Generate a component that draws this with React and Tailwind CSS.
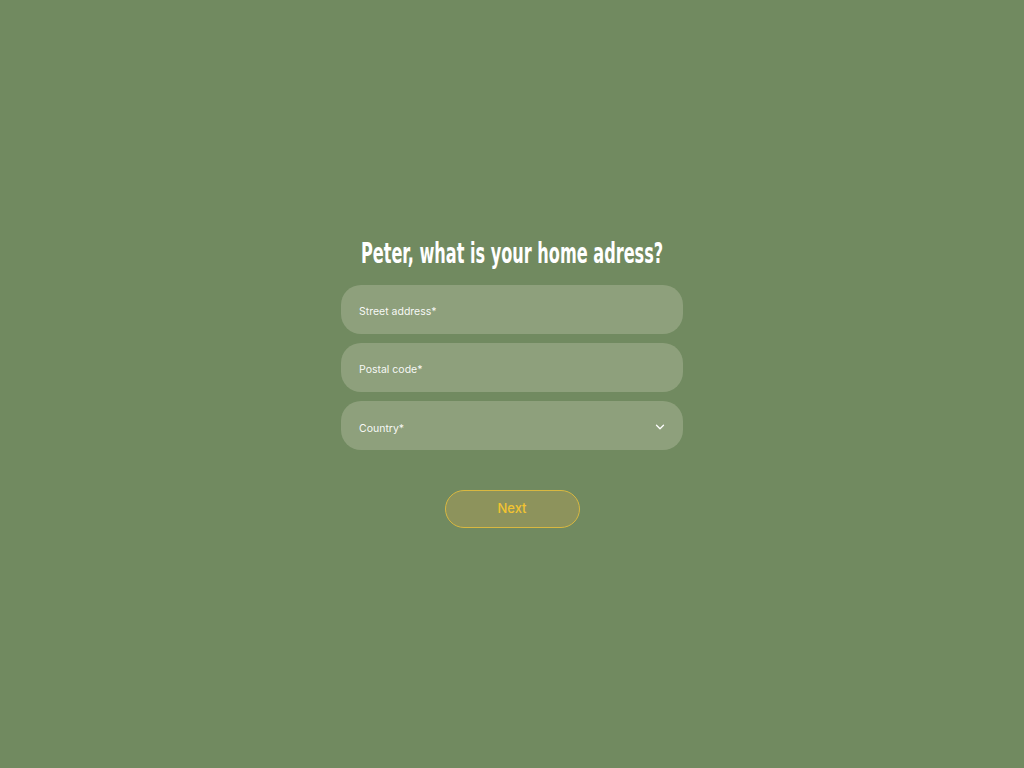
import React from 'react';
import { ChevronDown } from 'lucide-react';

const Field = ({ label, select, className = '' }) => (
  <div className={`flex h-[49px] w-full items-center justify-between rounded-[20px] bg-[#8ea07c] pl-[18px] pr-[16px] ${className}`}>
    <span className="text-[10.5px] text-white/95">{label}</span>
    {select && <ChevronDown className="mt-[-5px] h-[14px] w-[14px] text-white" strokeWidth={2.2} />}
  </div>
);

export default function App() {
  return (
    <div className="flex min-h-screen w-full flex-col items-center bg-[#718a60] pt-[237px] font-['Inter',sans-serif]">
      <h1 className="inline-block origin-center scale-x-[0.64] font-['DejaVu_Sans',sans-serif] font-stretch-condensed text-[28px] font-bold leading-[34px] text-white">
        Peter, what is your home adress?
      </h1>
      <div className="mt-[14px] flex w-[342px] flex-col gap-[9px]">
        <Field label="Street address*" className="pt-[5px]" />
        <Field label="Postal code*" className="pt-[5px]" />
        <Field label="Country*" select className="pt-[7px]" />
      </div>
      <button className="mt-[40px] h-[38px] w-[135px] rounded-full border border-[#d9b840] bg-[#8d935c] text-[13px] font-medium text-[#f2c431]">
        Next
      </button>
    </div>
  );
}
